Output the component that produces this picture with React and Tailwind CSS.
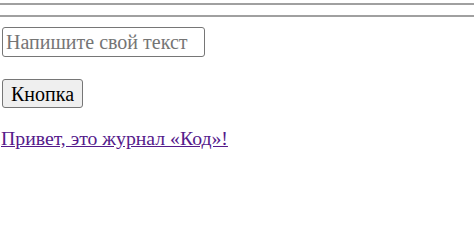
export default function App() {
  return (
    <div className="flex flex-col items-start bg-white w-[474px] h-[231px] font-['Liberation_Serif',serif] text-black">
      <div className="w-full h-[14px] mt-[3px] border-y-2 border-[#a0a0a0]" />
      <input
        type="text"
        placeholder="Напишите свой текст"
        className="mt-[10px] ml-[2px] w-[203px] h-[30px] px-[3px] border border-[#767676] rounded-[3px] text-[20px] placeholder:text-[#757575] outline-none"
      />
      <button
        type="button"
        className="mt-[22px] ml-[2px] h-[29px] px-[8px] bg-[#efefef] border border-[#767676] rounded-[3px] text-[20px] leading-none"
      >
        Кнопка
      </button>
      <a href="#" className="mt-[16px] ml-[1px] text-[19.75px] text-[#551a8b] underline">
        Привет, это журнал «Код»!
      </a>
    </div>
  );
}
